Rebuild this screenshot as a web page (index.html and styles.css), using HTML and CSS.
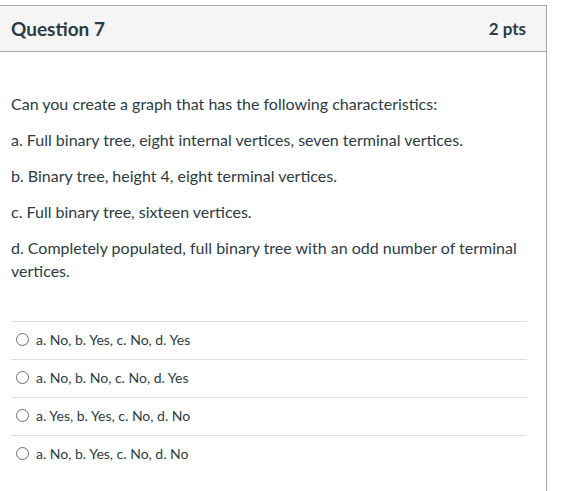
FILE: index.html
```html
<!DOCTYPE html>
<html>
<head>
<meta charset="utf-8">
<link rel="stylesheet" href="styles.css">
</head>
<body>
<div class="card">
  <div class="header">
    <h2 class="title">Question 7</h2>
    <span class="pts">2 pts</span>
  </div>
  <div class="body">
    <div class="question">
      <p>Can you create a graph that has the following characteristics:</p>
      <p>a. Full binary tree, eight internal vertices, seven terminal vertices.</p>
      <p>b. Binary tree, height 4, eight terminal vertices.</p>
      <p>c. Full binary tree, sixteen vertices.</p>
      <p>d. Completely populated, full binary tree with an odd number of terminal vertices.</p>
    </div>
    <div class="answers">
      <label class="answer"><span class="radio"></span><span>a. No, b. Yes, c. No, d. Yes</span></label>
      <label class="answer"><span class="radio"></span><span>a. No, b. No, c. No, d. Yes</span></label>
      <label class="answer"><span class="radio"></span><span>a. Yes, b. Yes, c. No, d. No</span></label>
      <label class="answer"><span class="radio"></span><span>a. No, b. Yes, c. No, d. No</span></label>
    </div>
  </div>
</div>
</body>
</html>
```
FILE: styles.css
```css
html, body {
  margin: 0;
  padding: 0;
  background: #ffffff;
}
body {
  font-family: Lato, "Open Sans", sans-serif;
  color: #2d3b45;
}
.card {
  margin-top: 5px;
  width: 547px;
  box-sizing: border-box;
  border-top: 1px solid #a8a8a8;
  border-right: 1px solid #a8a8a8;
  min-height: 486px;
}
.header {
  height: 45px;
  background: #f5f5f5;
  border-bottom: 1px solid #a8a8a8;
  display: flex;
  align-items: center;
  justify-content: space-between;
  padding: 0 20px 0 11px;
}
.title {
  margin: 0;
  font-size: 19px;
  font-weight: 700;
  color: #2d3b45;
}
.pts {
  font-size: 17px;
  font-weight: 700;
  color: #2d3b45;
}
.body {
  padding: 40px 19px 0 11px;
}
.question p {
  margin: 0 0 13px;
  font-size: 16px;
  line-height: 23px;
}
.answers {
  margin-top: 39px;
}
.answer {
  display: flex;
  align-items: center;
  gap: 7px;
  height: 37px;
  box-sizing: content-box;
  border-top: 1px solid #dddddd;
  padding: 0 0 0 5px;
  font-size: 14px;
  color: #2d3b45;
}
.answer > span:last-child {
  margin-top: -3px;
}
.radio {
  width: 13px;
  height: 13px;
  box-sizing: border-box;
  border: 1px solid #6b6b6b;
  border-radius: 50%;
  background: #fff;
  flex: none;
  margin-top: -2px;
}
```
